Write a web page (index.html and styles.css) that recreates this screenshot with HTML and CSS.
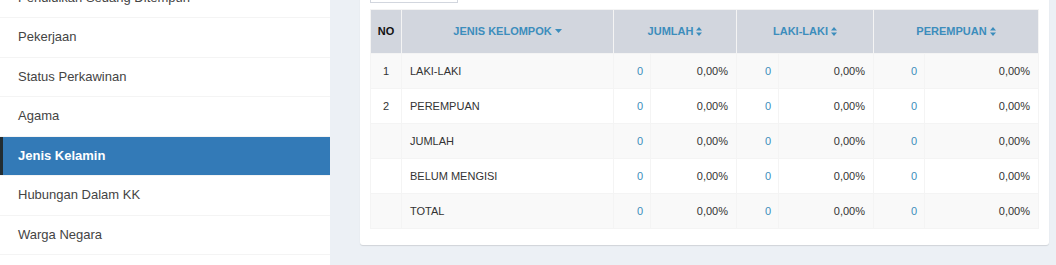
FILE: index.html
```html
<!DOCTYPE html>
<html lang="id">
<head>
<meta charset="utf-8">
<title>Statistik Penduduk</title>
<link rel="stylesheet" href="styles.css">
</head>
<body>
<div class="layout">
  <aside class="sidebar">
    <ul class="menu">
      <li class="menu-item"><a href="#">Pendidikan Sedang Ditempuh</a></li>
      <li class="menu-item"><a href="#">Pekerjaan</a></li>
      <li class="menu-item"><a href="#">Status Perkawinan</a></li>
      <li class="menu-item"><a href="#">Agama</a></li>
      <li class="menu-item active"><a href="#">Jenis Kelamin</a></li>
      <li class="menu-item"><a href="#">Hubungan Dalam KK</a></li>
      <li class="menu-item"><a href="#">Warga Negara</a></li>
    </ul>
  </aside>
  <main class="content">
    <section class="box">
      <div class="toolbar"><div class="search"></div></div>
      <table class="stats">
        <colgroup>
          <col class="c-no"><col class="c-name"><col class="c-n1"><col class="c-p1"><col class="c-n2"><col class="c-p2"><col class="c-n3"><col class="c-p3">
        </colgroup>
        <thead>
          <tr>
            <th class="th-no">NO</th>
            <th><a href="#">JENIS KELOMPOK</a><svg class="caret" width="7" height="4" viewBox="0 0 7 4"><path d="M0 0h7L3.5 4z" fill="#3c8dbc"/></svg></th>
            <th colspan="2"><a href="#">JUMLAH</a><svg class="sort" width="6" height="9" viewBox="0 0 6 9"><path d="M0 3.6L3 0l3 3.6zM0 5.4h6L3 9z" fill="#3c8dbc"/></svg></th>
            <th colspan="2"><a href="#">LAKI-LAKI</a><svg class="sort" width="6" height="9" viewBox="0 0 6 9"><path d="M0 3.6L3 0l3 3.6zM0 5.4h6L3 9z" fill="#3c8dbc"/></svg></th>
            <th colspan="2"><a href="#">PEREMPUAN</a><svg class="sort" width="6" height="9" viewBox="0 0 6 9"><path d="M0 3.6L3 0l3 3.6zM0 5.4h6L3 9z" fill="#3c8dbc"/></svg></th>
          </tr>
        </thead>
        <tbody>
          <tr>
            <td class="no">1</td><td>LAKI-LAKI</td>
            <td class="num"><a href="#">0</a></td><td class="pct">0,00%</td>
            <td class="num"><a href="#">0</a></td><td class="pct">0,00%</td>
            <td class="num"><a href="#">0</a></td><td class="pct">0,00%</td>
          </tr>
          <tr>
            <td class="no">2</td><td>PEREMPUAN</td>
            <td class="num"><a href="#">0</a></td><td class="pct">0,00%</td>
            <td class="num"><a href="#">0</a></td><td class="pct">0,00%</td>
            <td class="num"><a href="#">0</a></td><td class="pct">0,00%</td>
          </tr>
          <tr>
            <td class="no"></td><td>JUMLAH</td>
            <td class="num"><a href="#">0</a></td><td class="pct">0,00%</td>
            <td class="num"><a href="#">0</a></td><td class="pct">0,00%</td>
            <td class="num"><a href="#">0</a></td><td class="pct">0,00%</td>
          </tr>
          <tr>
            <td class="no"></td><td>BELUM MENGISI</td>
            <td class="num"><a href="#">0</a></td><td class="pct">0,00%</td>
            <td class="num"><a href="#">0</a></td><td class="pct">0,00%</td>
            <td class="num"><a href="#">0</a></td><td class="pct">0,00%</td>
          </tr>
          <tr>
            <td class="no"></td><td>TOTAL</td>
            <td class="num"><a href="#">0</a></td><td class="pct">0,00%</td>
            <td class="num"><a href="#">0</a></td><td class="pct">0,00%</td>
            <td class="num"><a href="#">0</a></td><td class="pct">0,00%</td>
          </tr>
        </tbody>
      </table>
    </section>
  </main>
</div>
</body>
</html>
```
FILE: styles.css
```css
* { box-sizing: border-box; }
html, body { margin: 0; padding: 0; }
body {
  background: #ecf0f5;
  font-family: "Liberation Sans", Arial, Helvetica, sans-serif;
  color: #333;
  height: 265px;
  overflow: hidden;
}
a { text-decoration: none; }

.layout {
  display: flex;
  align-items: flex-start;
  height: 265px;
}

.sidebar {
  width: 330px;
  flex: 0 0 330px;
  background: #fff;
  align-self: stretch;
}
.menu {
  list-style: none;
  margin: -21.5px 0 0 0;
  padding: 0;
}
.menu-item {
  border-bottom: 1px solid #f4f4f4;
}
.menu-item a {
  display: block;
  padding: 10px 18px 10px 15px;
  line-height: 18.5px;
  font-size: 13px;
  color: #444;
  border-left: 3px solid transparent;
}
.menu-item.active a {
  background: #337ab7;
  color: #fff;
  font-weight: bold;
  border-left-color: #222d32;
}

.content {
  flex: 1;
  margin: -37px 8px 0 30px;
}
.box {
  background: #fff;
  border-radius: 3px;
  box-shadow: 0 1px 1px rgba(0, 0, 0, 0.12);
  padding: 10px 10px 16px 10px;
}
.toolbar {
  margin-bottom: 6px;
}
.search {
  width: 88px;
  height: 30px;
  border: 1px solid #d2d6de;
  background: #fff;
}

.stats {
  width: 100%;
  table-layout: fixed;
  border-collapse: collapse;
  border: 1px solid #f4f4f4;
  font-size: 11px;
}
.c-no { width: 31px; }
.c-name { width: 212px; }
.c-n1 { width: 37px; }
.c-p1 { width: 86px; }
.c-n2 { width: 42px; }
.c-p2 { width: 95px; }
.c-n3 { width: 51px; }
.c-p3 { width: 114px; }

.stats th {
  background: #d2d6de;
  border: 1px solid #f4f4f4;
  padding: 12px 4px;
  line-height: 19px;
  font-weight: bold;
  text-align: center;
  white-space: nowrap;
}
.stats th a { color: #3c8dbc; }
.stats th.th-no { color: #111; }
.stats th svg {
  vertical-align: middle;
  margin-left: 3px;
  position: relative;
  top: -1px;
}

.stats td {
  border: 1px solid #f4f4f4;
  padding: 8px 8px;
  line-height: 18px;
  color: #333;
  white-space: nowrap;
}
.stats tbody tr:nth-child(odd) td { background: #f9f9f9; }
.stats td.no { text-align: center; padding: 8px 4px; }
.stats td.num { text-align: right; padding-right: 7px; }
.stats td.num a { color: #3c8dbc; }
.stats td.pct { text-align: right; padding-right: 8px; }
```
